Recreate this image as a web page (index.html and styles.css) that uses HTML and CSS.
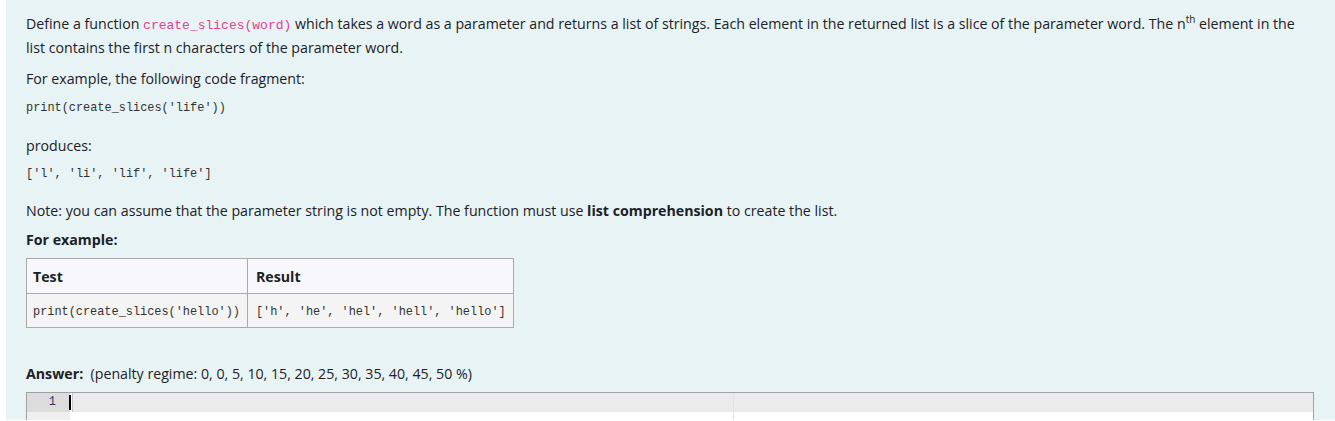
FILE: index.html
```html
<!DOCTYPE html>
<html>
<head>
<meta charset="utf-8">
<link rel="stylesheet" href="styles.css">
</head>
<body>
<div class="formulation">
  <div class="qtext">
    <p class="p-intro">Define a function <code class="inline">create_slices(word)</code> which takes a word as a parameter and returns a list of strings. Each element in the returned list is a slice of the parameter word. The <span class="var">n</span><sup>th</sup> element in the list contains the first <span class="var">n</span> characters of the parameter word.</p>
    <p class="p-ex">For example, the following code fragment:</p>
    <pre class="code code-1">print(create_slices('life'))</pre>
    <p class="p-prod">produces:</p>
    <pre class="code code-2">['l', 'li', 'lif', 'life']</pre>
    <p class="p-note">Note: you can assume that the parameter string is not empty. The function must use <strong>list comprehension</strong> to create the list.</p>
    <h4 class="for-example">For example:</h4>
    <table class="examples">
      <thead>
        <tr><th class="c-test">Test</th><th class="c-result">Result</th></tr>
      </thead>
      <tbody>
        <tr><td class="c-test"><pre class="cell">print(create_slices('hello'))</pre></td><td class="c-result"><pre class="cell">['h', 'he', 'hel', 'hell', 'hello']</pre></td></tr>
      </tbody>
    </table>
  </div>
  <div class="answer-label"><strong>Answer:</strong>&nbsp; (penalty regime: 0, 0, 5, 10, 15, 20, 25, 30, 35, 40, 45, 50 %)</div>
  <div class="editor">
    <div class="gutter">
      <div class="gutter-active"><span class="ln">1</span></div>
    </div>
    <div class="content">
      <div class="active-line"><span class="cursor"></span></div>
      <div class="print-margin"></div>
    </div>
  </div>
</div>
</body>
</html>
```

FILE: styles.css
```css
html, body {
  margin: 0;
  padding: 0;
  background: #ffffff;
  overflow: hidden;
}
body {
  font-family: "Open Sans", "Noto Sans", sans-serif;
  font-size: 14.2px;
  color: #1d2125;
}
.formulation {
  margin-left: 6px;
  background: #e7f3f5;
  padding: 12px 21px 0 20px;
  height: 420px;
  box-sizing: border-box;
}
.qtext p {
  margin: 0;
  line-height: 24px;
}
sup {
  font-size: 10px;
  line-height: 0;
  vertical-align: 6px;
}
code.inline {
  font-family: "Liberation Mono", monospace;
  font-size: 13px;
  line-height: 0;
  color: #e83e8c;
}
.qtext p.p-ex { margin-top: 7px; }
pre.code {
  font-family: "Liberation Mono", monospace;
  font-size: 11.9px;
  line-height: 18px;
  color: #333333;
  margin: 0;
}
pre.code-1 { margin-top: 8px; }
.qtext p.p-prod { margin-top: 17px; }
pre.code-2 { margin-top: 7px; }
.qtext p.p-note { margin-top: 16px; }
h4.for-example {
  margin: 5px 0 0;
  font-size: 14.2px;
  font-weight: 700;
  line-height: 24px;
}
table.examples {
  margin-top: 6px;
  border-collapse: collapse;
}
table.examples th,
table.examples td {
  border: 1px solid #aaaaaa;
  text-align: left;
  padding: 0 7px 0 6px;
}
table.examples th {
  background: #f8f8fc;
  font-weight: 700;
  height: 34px;
}
table.examples td {
  background: #f4f4f4;
  height: 31px;
  padding-top: 2px;
}
table.examples td.c-result,
table.examples th.c-result {
  padding-left: 8px;
}
pre.cell {
  margin: 0;
  font-family: "Liberation Mono", monospace;
  font-size: 11.9px;
  color: #333333;
}
.answer-label {
  margin-top: 34px;
  line-height: 24px;
}
.answer-label strong { font-weight: 700; }
.editor {
  margin-top: 6px;
  display: flex;
  border: 1px solid #a0a0a0;
  height: 200px;
  background: #ffffff;
}
.gutter {
  width: 43px;
  background: #efefef;
  flex: none;
}
.gutter-active {
  height: 19px;
  background: #dcdcdc;
  text-align: right;
  padding-right: 14px;
  font-family: "Liberation Mono", monospace;
  font-size: 12px;
  line-height: 19px;
  color: #333366;
}
.content {
  flex: 1;
  position: relative;
}
.active-line {
  height: 19px;
  background: #ebebeb;
  border-left: 1px solid #c8c8c8;
  margin-left: 2px;
}
.cursor {
  position: absolute;
  left: -1px;
  top: 2px;
  width: 2px;
  height: 15px;
  background: #000000;
}
.print-margin {
  position: absolute;
  left: 663px;
  top: 0;
  bottom: 0;
  width: 1px;
  background: #e2e2e2;
}
```
